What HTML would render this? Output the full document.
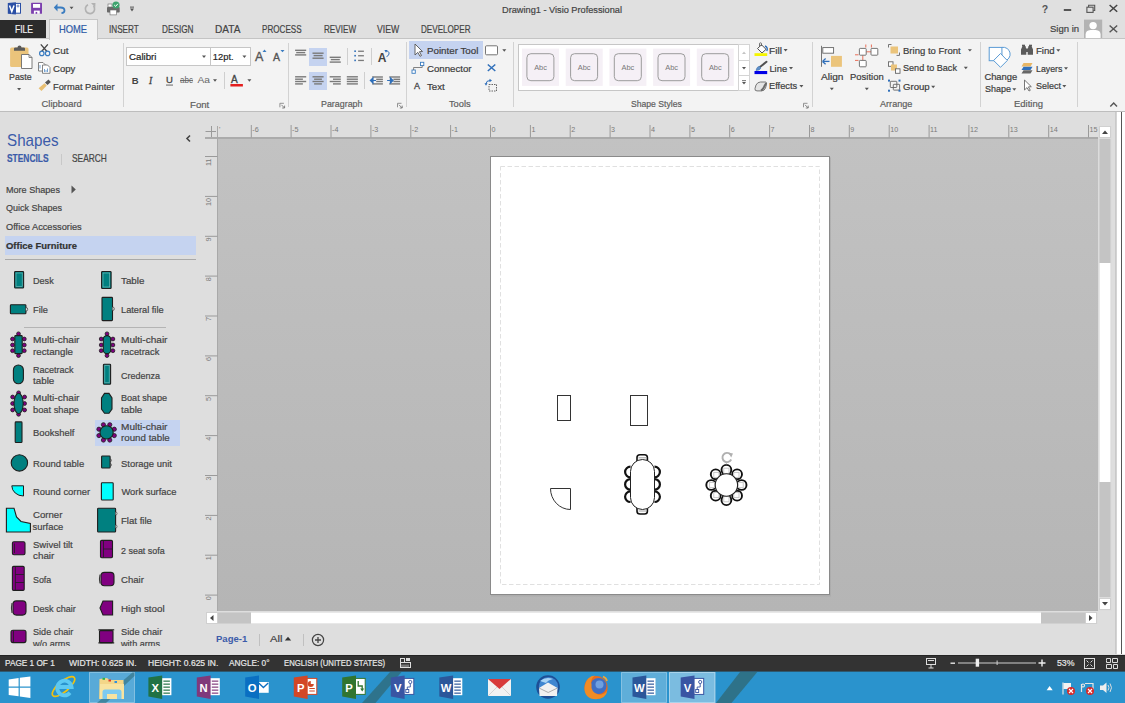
<!DOCTYPE html><html><head><meta charset="utf-8"><style>html,body{margin:0;padding:0;width:1125px;height:703px;overflow:hidden;position:relative;font-family:"Liberation Sans", sans-serif;}div{box-sizing:border-box}div[id]{-webkit-text-stroke:0.2px currentColor}</style></head><body><div style="position:absolute;left:0px;top:0px;width:1125px;height:38px;background:#e0e0e0;"></div>
<div style="position:absolute;left:0px;top:38px;width:1125px;height:73px;background:#f3f3f3;"></div>
<div style="position:absolute;left:0px;top:111px;width:1125px;height:1.2px;background:#bdbdbd;"></div>
<div style="position:absolute;left:0px;top:112px;width:1125px;height:543px;background:#dedede;"></div>
<div id="t0" style="position:absolute;left:501.80px;top:5.14px;font-size:9.6px;line-height:9.6px;color:#444;font-weight:400;white-space:nowrap;transform:scaleX(0.959);transform-origin:0 0;">Drawing1 - Visio Professional</div>
<div id="t1" style="position:absolute;left:1049.60px;top:23.71px;font-size:9.4px;line-height:9.4px;color:#444;font-weight:400;white-space:nowrap;transform:scaleX(1.018);transform-origin:0 0;">Sign in</div>
<div style="position:absolute;left:0px;top:20px;width:46px;height:18.5px;background:#2b2b2b;"></div>
<div id="t2" style="position:absolute;left:14.80px;top:25.03px;font-size:10.2px;line-height:10.2px;color:#f0f0f0;font-weight:400;white-space:nowrap;transform:scaleX(0.837);transform-origin:0 0;">FILE</div>
<div style="position:absolute;left:49px;top:19px;width:49px;height:21px;background:#f3f3f3;border:1px solid #c6c6c6;border-bottom:none"></div>
<div id="t3" style="position:absolute;left:59.40px;top:25.03px;font-size:10.2px;line-height:10.2px;color:#2f5ba6;font-weight:400;white-space:nowrap;transform:scaleX(0.919);transform-origin:0 0;">HOME</div>
<div id="t4" style="position:absolute;left:109.20px;top:25.03px;font-size:10.2px;line-height:10.2px;color:#444;font-weight:400;white-space:nowrap;transform:scaleX(0.799);transform-origin:0 0;">INSERT</div>
<div id="t5" style="position:absolute;left:161.80px;top:25.03px;font-size:10.2px;line-height:10.2px;color:#444;font-weight:400;white-space:nowrap;transform:scaleX(0.806);transform-origin:0 0;">DESIGN</div>
<div id="t6" style="position:absolute;left:215.20px;top:25.03px;font-size:10.2px;line-height:10.2px;color:#444;font-weight:400;white-space:nowrap;transform:scaleX(0.990);transform-origin:0 0;">DATA</div>
<div id="t7" style="position:absolute;left:262.00px;top:25.03px;font-size:10.2px;line-height:10.2px;color:#444;font-weight:400;white-space:nowrap;transform:scaleX(0.795);transform-origin:0 0;">PROCESS</div>
<div id="t8" style="position:absolute;left:323.50px;top:25.03px;font-size:10.2px;line-height:10.2px;color:#444;font-weight:400;white-space:nowrap;transform:scaleX(0.798);transform-origin:0 0;">REVIEW</div>
<div id="t9" style="position:absolute;left:377.00px;top:25.03px;font-size:10.2px;line-height:10.2px;color:#444;font-weight:400;white-space:nowrap;transform:scaleX(0.852);transform-origin:0 0;">VIEW</div>
<div id="t10" style="position:absolute;left:420.80px;top:25.03px;font-size:10.2px;line-height:10.2px;color:#444;font-weight:400;white-space:nowrap;transform:scaleX(0.795);transform-origin:0 0;">DEVELOPER</div>
<div style="position:absolute;left:123px;top:43px;width:1px;height:64px;background:#d2d2d2;"></div>
<div style="position:absolute;left:288px;top:42.7px;width:1px;height:64.3px;background:#d2d2d2;"></div>
<div style="position:absolute;left:406px;top:42px;width:1px;height:65px;background:#d2d2d2;"></div>
<div style="position:absolute;left:513px;top:42px;width:1px;height:65px;background:#d2d2d2;"></div>
<div style="position:absolute;left:812px;top:42px;width:1px;height:65px;background:#d2d2d2;"></div>
<div style="position:absolute;left:980px;top:42px;width:1px;height:65px;background:#d2d2d2;"></div>
<div style="position:absolute;left:1077px;top:42px;width:1px;height:65px;background:#d2d2d2;"></div>
<div id="t11" style="position:absolute;left:8.80px;top:72.41px;font-size:9.4px;line-height:9.4px;color:#3c3c3c;font-weight:400;white-space:nowrap;transform:scaleX(0.942);transform-origin:0 0;">Paste</div>
<div id="t12" style="position:absolute;left:53.20px;top:45.81px;font-size:9.4px;line-height:9.4px;color:#3c3c3c;font-weight:400;white-space:nowrap;transform:scaleX(1.069);transform-origin:0 0;">Cut</div>
<div id="t13" style="position:absolute;left:53.20px;top:64.01px;font-size:9.4px;line-height:9.4px;color:#3c3c3c;font-weight:400;white-space:nowrap;transform:scaleX(1.019);transform-origin:0 0;">Copy</div>
<div id="t14" style="position:absolute;left:53.20px;top:81.71px;font-size:9.4px;line-height:9.4px;color:#3c3c3c;font-weight:400;white-space:nowrap;transform:scaleX(0.994);transform-origin:0 0;">Format Painter</div>
<div id="t15" style="position:absolute;left:41.60px;top:99.31px;font-size:9.4px;line-height:9.4px;color:#5e5e5e;font-weight:400;white-space:nowrap;">Clipboard</div>
<div style="position:absolute;left:126px;top:47px;width:85px;height:19px;background:#fff;border:1px solid #c6c6c6"></div>
<div style="position:absolute;left:210px;top:47px;width:41px;height:19px;background:#fff;border:1px solid #c6c6c6"></div>
<div id="t16" style="position:absolute;left:128.80px;top:51.81px;font-size:9.4px;line-height:9.4px;color:#262626;font-weight:400;white-space:nowrap;transform:scaleX(1.035);transform-origin:0 0;">Calibri</div>
<div id="t17" style="position:absolute;left:212.80px;top:51.81px;font-size:9.4px;line-height:9.4px;color:#262626;font-weight:400;white-space:nowrap;">12pt.</div>
<div style="position:absolute;left:224px;top:72px;width:1px;height:17px;background:#cfcfcf;"></div>
<div id="t18" style="position:absolute;left:189.80px;top:99.51px;font-size:9.4px;line-height:9.4px;color:#5e5e5e;font-weight:400;white-space:nowrap;transform:scaleX(1.028);transform-origin:0 0;">Font</div>
<div style="position:absolute;left:309px;top:48px;width:17.5px;height:17.5px;background:#c5d3f0;"></div>
<div style="position:absolute;left:309px;top:72px;width:17.5px;height:17.5px;background:#c5d3f0;"></div>
<div style="position:absolute;left:347px;top:48px;width:1px;height:16.5px;background:#cfcfcf;"></div>
<div style="position:absolute;left:371px;top:48px;width:1px;height:16.5px;background:#cfcfcf;"></div>
<div style="position:absolute;left:364px;top:72px;width:1px;height:17px;background:#cfcfcf;"></div>
<div id="t19" style="position:absolute;left:320.60px;top:99.31px;font-size:9.4px;line-height:9.4px;color:#5e5e5e;font-weight:400;white-space:nowrap;transform:scaleX(0.948);transform-origin:0 0;">Paragraph</div>
<div style="position:absolute;left:409px;top:41px;width:74px;height:18px;background:#c5d3f0;"></div>
<div id="t20" style="position:absolute;left:426.50px;top:45.81px;font-size:9.4px;line-height:9.4px;color:#3c3c3c;font-weight:400;white-space:nowrap;transform:scaleX(1.042);transform-origin:0 0;">Pointer Tool</div>
<div id="t21" style="position:absolute;left:426.50px;top:63.61px;font-size:9.4px;line-height:9.4px;color:#3c3c3c;font-weight:400;white-space:nowrap;transform:scaleX(1.029);transform-origin:0 0;">Connector</div>
<div id="t22" style="position:absolute;left:426.50px;top:81.71px;font-size:9.4px;line-height:9.4px;color:#3c3c3c;font-weight:400;white-space:nowrap;transform:scaleX(1.035);transform-origin:0 0;">Text</div>
<div id="t23" style="position:absolute;left:449.20px;top:99.31px;font-size:9.4px;line-height:9.4px;color:#5e5e5e;font-weight:400;white-space:nowrap;transform:scaleX(0.987);transform-origin:0 0;">Tools</div>
<div style="position:absolute;left:518px;top:44px;width:232px;height:47px;background:#fff;border:1px solid #c6c6c6"></div>
<div id="t24" style="position:absolute;left:769.40px;top:45.61px;font-size:9.4px;line-height:9.4px;color:#3c3c3c;font-weight:400;white-space:nowrap;transform:scaleX(1.076);transform-origin:0 0;">Fill</div>
<div id="t25" style="position:absolute;left:769.40px;top:63.61px;font-size:9.4px;line-height:9.4px;color:#3c3c3c;font-weight:400;white-space:nowrap;">Line</div>
<div id="t26" style="position:absolute;left:769.40px;top:81.31px;font-size:9.4px;line-height:9.4px;color:#3c3c3c;font-weight:400;white-space:nowrap;transform:scaleX(0.989);transform-origin:0 0;">Effects</div>
<div id="t27" style="position:absolute;left:631.30px;top:99.31px;font-size:9.4px;line-height:9.4px;color:#5e5e5e;font-weight:400;white-space:nowrap;transform:scaleX(0.919);transform-origin:0 0;">Shape Styles</div>
<div id="t28" style="position:absolute;left:821.00px;top:72.31px;font-size:9.4px;line-height:9.4px;color:#3c3c3c;font-weight:400;white-space:nowrap;transform:scaleX(1.079);transform-origin:0 0;">Align</div>
<div id="t29" style="position:absolute;left:850.20px;top:72.31px;font-size:9.4px;line-height:9.4px;color:#3c3c3c;font-weight:400;white-space:nowrap;transform:scaleX(1.010);transform-origin:0 0;">Position</div>
<div id="t30" style="position:absolute;left:903.10px;top:45.91px;font-size:9.4px;line-height:9.4px;color:#3c3c3c;font-weight:400;white-space:nowrap;transform:scaleX(1.016);transform-origin:0 0;">Bring to Front</div>
<div id="t31" style="position:absolute;left:903.10px;top:63.41px;font-size:9.4px;line-height:9.4px;color:#3c3c3c;font-weight:400;white-space:nowrap;transform:scaleX(0.967);transform-origin:0 0;">Send to Back</div>
<div id="t32" style="position:absolute;left:903.10px;top:82.01px;font-size:9.4px;line-height:9.4px;color:#3c3c3c;font-weight:400;white-space:nowrap;transform:scaleX(1.024);transform-origin:0 0;">Group</div>
<div id="t33" style="position:absolute;left:879.80px;top:99.31px;font-size:9.4px;line-height:9.4px;color:#5e5e5e;font-weight:400;white-space:nowrap;transform:scaleX(0.971);transform-origin:0 0;">Arrange</div>
<div id="t34" style="position:absolute;left:984.40px;top:72.41px;font-size:9.4px;line-height:9.4px;color:#3c3c3c;font-weight:400;white-space:nowrap;">Change</div>
<div id="t35" style="position:absolute;left:985.20px;top:84.41px;font-size:9.4px;line-height:9.4px;color:#3c3c3c;font-weight:400;white-space:nowrap;transform:scaleX(0.955);transform-origin:0 0;">Shape</div>
<div id="t36" style="position:absolute;left:1035.80px;top:45.71px;font-size:9.4px;line-height:9.4px;color:#3c3c3c;font-weight:400;white-space:nowrap;transform:scaleX(1.025);transform-origin:0 0;">Find</div>
<div id="t37" style="position:absolute;left:1035.80px;top:63.61px;font-size:9.4px;line-height:9.4px;color:#3c3c3c;font-weight:400;white-space:nowrap;transform:scaleX(0.938);transform-origin:0 0;">Layers</div>
<div id="t38" style="position:absolute;left:1035.80px;top:81.31px;font-size:9.4px;line-height:9.4px;color:#3c3c3c;font-weight:400;white-space:nowrap;transform:scaleX(0.959);transform-origin:0 0;">Select</div>
<div id="t39" style="position:absolute;left:1013.50px;top:99.31px;font-size:9.4px;line-height:9.4px;color:#5e5e5e;font-weight:400;white-space:nowrap;transform:scaleX(1.011);transform-origin:0 0;">Editing</div>
<div id="t40" style="position:absolute;left:7.30px;top:131.85px;font-size:17px;line-height:17px;color:#3b5ba9;font-weight:400;white-space:nowrap;transform:scaleX(0.893);transform-origin:0 0;-webkit-text-stroke:0">Shapes</div>
<div id="t41" style="position:absolute;left:7.30px;top:154.44px;font-size:10.3px;line-height:10.3px;color:#3b5ba9;font-weight:700;white-space:nowrap;transform:scaleX(0.815);transform-origin:0 0;">STENCILS</div>
<div style="position:absolute;left:61px;top:154px;width:1px;height:11px;background:#c8c8c8;"></div>
<div id="t42" style="position:absolute;left:71.90px;top:154.44px;font-size:10.3px;line-height:10.3px;color:#444;font-weight:400;white-space:nowrap;transform:scaleX(0.813);transform-origin:0 0;">SEARCH</div>
<div id="t43" style="position:absolute;left:6.20px;top:185.21px;font-size:9.4px;line-height:9.4px;color:#444;font-weight:400;white-space:nowrap;transform:scaleX(0.967);transform-origin:0 0;">More Shapes</div>
<div id="t44" style="position:absolute;left:6.20px;top:203.41px;font-size:9.4px;line-height:9.4px;color:#444;font-weight:400;white-space:nowrap;transform:scaleX(0.961);transform-origin:0 0;">Quick Shapes</div>
<div id="t45" style="position:absolute;left:6.20px;top:221.51px;font-size:9.4px;line-height:9.4px;color:#444;font-weight:400;white-space:nowrap;transform:scaleX(0.984);transform-origin:0 0;">Office Accessories</div>
<div style="position:absolute;left:5px;top:236px;width:191px;height:19px;background:#c5d3f0;"></div>
<div id="t46" style="position:absolute;left:6.20px;top:240.71px;font-size:9.4px;line-height:9.4px;color:#333;font-weight:700;white-space:nowrap;transform:scaleX(1.010);transform-origin:0 0;">Office Furniture</div>
<div style="position:absolute;left:5px;top:259px;width:191px;height:1px;background:#a9a9a9;"></div>
<div style="position:absolute;left:24px;top:327px;width:142px;height:1px;background:#b4b4b4;"></div>
<div style="position:absolute;left:94.5px;top:420px;width:85.5px;height:26px;background:#c5d3f0;"></div>
<div id="t47" style="position:absolute;left:32.60px;top:276.41px;font-size:9.4px;line-height:9.4px;color:#444;font-weight:400;white-space:nowrap;transform:scaleX(0.969);transform-origin:0 0;">Desk</div>
<div id="t48" style="position:absolute;left:121.40px;top:276.41px;font-size:9.4px;line-height:9.4px;color:#444;font-weight:400;white-space:nowrap;transform:scaleX(1.044);transform-origin:0 0;">Table</div>
<div id="t49" style="position:absolute;left:32.60px;top:305.21px;font-size:9.4px;line-height:9.4px;color:#444;font-weight:400;white-space:nowrap;transform:scaleX(0.986);transform-origin:0 0;">File</div>
<div id="t50" style="position:absolute;left:121.40px;top:305.21px;font-size:9.4px;line-height:9.4px;color:#444;font-weight:400;white-space:nowrap;transform:scaleX(0.985);transform-origin:0 0;">Lateral file</div>
<div id="t51" style="position:absolute;left:32.60px;top:335.01px;font-size:9.4px;line-height:9.4px;color:#444;font-weight:400;white-space:nowrap;transform:scaleX(1.075);transform-origin:0 0;">Multi-chair</div>
<div id="t52" style="position:absolute;left:32.60px;top:346.51px;font-size:9.4px;line-height:9.4px;color:#444;font-weight:400;white-space:nowrap;transform:scaleX(1.037);transform-origin:0 0;">rectangle</div>
<div id="t53" style="position:absolute;left:121.40px;top:335.01px;font-size:9.4px;line-height:9.4px;color:#444;font-weight:400;white-space:nowrap;transform:scaleX(1.075);transform-origin:0 0;">Multi-chair</div>
<div id="t54" style="position:absolute;left:121.40px;top:346.51px;font-size:9.4px;line-height:9.4px;color:#444;font-weight:400;white-space:nowrap;transform:scaleX(0.993);transform-origin:0 0;">racetrack</div>
<div id="t55" style="position:absolute;left:32.60px;top:364.71px;font-size:9.4px;line-height:9.4px;color:#444;font-weight:400;white-space:nowrap;transform:scaleX(0.962);transform-origin:0 0;">Racetrack</div>
<div id="t56" style="position:absolute;left:32.60px;top:376.01px;font-size:9.4px;line-height:9.4px;color:#444;font-weight:400;white-space:nowrap;transform:scaleX(1.047);transform-origin:0 0;">table</div>
<div id="t57" style="position:absolute;left:121.40px;top:370.81px;font-size:9.4px;line-height:9.4px;color:#444;font-weight:400;white-space:nowrap;transform:scaleX(0.957);transform-origin:0 0;">Credenza</div>
<div id="t58" style="position:absolute;left:32.60px;top:393.41px;font-size:9.4px;line-height:9.4px;color:#444;font-weight:400;white-space:nowrap;transform:scaleX(1.075);transform-origin:0 0;">Multi-chair</div>
<div id="t59" style="position:absolute;left:32.60px;top:405.41px;font-size:9.4px;line-height:9.4px;color:#444;font-weight:400;white-space:nowrap;transform:scaleX(0.991);transform-origin:0 0;">boat shape</div>
<div id="t60" style="position:absolute;left:121.40px;top:393.41px;font-size:9.4px;line-height:9.4px;color:#444;font-weight:400;white-space:nowrap;transform:scaleX(0.970);transform-origin:0 0;">Boat shape</div>
<div id="t61" style="position:absolute;left:121.40px;top:405.41px;font-size:9.4px;line-height:9.4px;color:#444;font-weight:400;white-space:nowrap;transform:scaleX(1.047);transform-origin:0 0;">table</div>
<div id="t62" style="position:absolute;left:32.60px;top:428.41px;font-size:9.4px;line-height:9.4px;color:#444;font-weight:400;white-space:nowrap;transform:scaleX(1.006);transform-origin:0 0;">Bookshelf</div>
<div id="t63" style="position:absolute;left:121.40px;top:422.01px;font-size:9.4px;line-height:9.4px;color:#444;font-weight:400;white-space:nowrap;transform:scaleX(1.075);transform-origin:0 0;">Multi-chair</div>
<div id="t64" style="position:absolute;left:121.40px;top:433.41px;font-size:9.4px;line-height:9.4px;color:#444;font-weight:400;white-space:nowrap;transform:scaleX(1.040);transform-origin:0 0;">round table</div>
<div id="t65" style="position:absolute;left:32.60px;top:458.51px;font-size:9.4px;line-height:9.4px;color:#444;font-weight:400;white-space:nowrap;transform:scaleX(1.013);transform-origin:0 0;">Round table</div>
<div id="t66" style="position:absolute;left:121.40px;top:458.51px;font-size:9.4px;line-height:9.4px;color:#444;font-weight:400;white-space:nowrap;transform:scaleX(1.007);transform-origin:0 0;">Storage unit</div>
<div id="t67" style="position:absolute;left:32.60px;top:487.21px;font-size:9.4px;line-height:9.4px;color:#444;font-weight:400;white-space:nowrap;transform:scaleX(1.005);transform-origin:0 0;">Round corner</div>
<div id="t68" style="position:absolute;left:121.40px;top:487.21px;font-size:9.4px;line-height:9.4px;color:#444;font-weight:400;white-space:nowrap;">Work surface</div>
<div id="t69" style="position:absolute;left:32.60px;top:510.21px;font-size:9.4px;line-height:9.4px;color:#444;font-weight:400;white-space:nowrap;transform:scaleX(1.026);transform-origin:0 0;">Corner</div>
<div id="t70" style="position:absolute;left:32.60px;top:521.61px;font-size:9.4px;line-height:9.4px;color:#444;font-weight:400;white-space:nowrap;">surface</div>
<div id="t71" style="position:absolute;left:121.40px;top:516.21px;font-size:9.4px;line-height:9.4px;color:#444;font-weight:400;white-space:nowrap;transform:scaleX(1.023);transform-origin:0 0;">Flat file</div>
<div id="t72" style="position:absolute;left:32.60px;top:539.51px;font-size:9.4px;line-height:9.4px;color:#444;font-weight:400;white-space:nowrap;transform:scaleX(1.018);transform-origin:0 0;">Swivel tilt</div>
<div id="t73" style="position:absolute;left:32.60px;top:551.21px;font-size:9.4px;line-height:9.4px;color:#444;font-weight:400;white-space:nowrap;transform:scaleX(1.048);transform-origin:0 0;">chair</div>
<div id="t74" style="position:absolute;left:121.40px;top:545.51px;font-size:9.4px;line-height:9.4px;color:#444;font-weight:400;white-space:nowrap;transform:scaleX(0.953);transform-origin:0 0;">2 seat sofa</div>
<div id="t75" style="position:absolute;left:32.60px;top:574.51px;font-size:9.4px;line-height:9.4px;color:#444;font-weight:400;white-space:nowrap;transform:scaleX(0.948);transform-origin:0 0;">Sofa</div>
<div id="t76" style="position:absolute;left:121.40px;top:574.51px;font-size:9.4px;line-height:9.4px;color:#444;font-weight:400;white-space:nowrap;transform:scaleX(1.018);transform-origin:0 0;">Chair</div>
<div id="t77" style="position:absolute;left:32.60px;top:603.51px;font-size:9.4px;line-height:9.4px;color:#444;font-weight:400;white-space:nowrap;transform:scaleX(0.966);transform-origin:0 0;">Desk chair</div>
<div id="t78" style="position:absolute;left:121.40px;top:603.51px;font-size:9.4px;line-height:9.4px;color:#444;font-weight:400;white-space:nowrap;transform:scaleX(1.048);transform-origin:0 0;">High stool</div>
<div id="t79" style="position:absolute;left:32.60px;top:627.41px;font-size:9.4px;line-height:9.4px;color:#444;font-weight:400;white-space:nowrap;transform:scaleX(0.969);transform-origin:0 0;">Side chair</div>
<div id="t80" style="position:absolute;left:32.60px;top:639.01px;font-size:9.4px;line-height:9.4px;color:#444;font-weight:400;white-space:nowrap;transform:scaleX(0.973);transform-origin:0 0;">w/o arms</div>
<div id="t81" style="position:absolute;left:121.40px;top:627.41px;font-size:9.4px;line-height:9.4px;color:#444;font-weight:400;white-space:nowrap;transform:scaleX(0.990);transform-origin:0 0;">Side chair</div>
<div id="t82" style="position:absolute;left:121.40px;top:639.01px;font-size:9.4px;line-height:9.4px;color:#444;font-weight:400;white-space:nowrap;transform:scaleX(0.972);transform-origin:0 0;">with arms</div>
<div style="position:absolute;left:0px;top:646px;width:200px;height:8px;background:#dedede;"></div>
<div style="position:absolute;left:217px;top:137px;width:881px;height:474px;background:linear-gradient(#c2c2c2, #b5b5b5);"></div>
<div style="position:absolute;left:205px;top:137px;width:1px;height:0px;background:#000;"></div>
<div id="t83" style="position:absolute;left:216.10px;top:633.87px;font-size:9.8px;line-height:9.8px;color:#3b5ba9;font-weight:700;white-space:nowrap;transform:scaleX(0.974);transform-origin:0 0;-webkit-text-stroke:0">Page-1</div>
<div style="position:absolute;left:259px;top:634px;width:1px;height:12px;background:#c0c0c0;"></div>
<div id="t84" style="position:absolute;left:269.80px;top:633.87px;font-size:9.8px;line-height:9.8px;color:#444;font-weight:400;white-space:nowrap;transform:scaleX(1.139);transform-origin:0 0;">All</div>
<div style="position:absolute;left:303px;top:634px;width:1px;height:12px;background:#c0c0c0;"></div>
<div style="position:absolute;left:0px;top:654.6px;width:1125px;height:17.4px;background:#333333;"></div>
<div style="position:absolute;left:0px;top:654.6px;width:1125px;height:1.2px;background:#242424;"></div>
<div id="t85" style="position:absolute;left:5.10px;top:659.05px;font-size:9px;line-height:9px;color:#e8e8e8;font-weight:400;white-space:nowrap;transform:scaleX(0.916);transform-origin:0 0;">PAGE 1 OF 1</div>
<div id="t86" style="position:absolute;left:69.10px;top:659.05px;font-size:9px;line-height:9px;color:#e8e8e8;font-weight:400;white-space:nowrap;transform:scaleX(0.953);transform-origin:0 0;">WIDTH: 0.625 IN.</div>
<div id="t87" style="position:absolute;left:147.80px;top:659.05px;font-size:9px;line-height:9px;color:#e8e8e8;font-weight:400;white-space:nowrap;transform:scaleX(0.943);transform-origin:0 0;">HEIGHT: 0.625 IN.</div>
<div id="t88" style="position:absolute;left:229.30px;top:659.05px;font-size:9px;line-height:9px;color:#e8e8e8;font-weight:400;white-space:nowrap;transform:scaleX(0.918);transform-origin:0 0;">ANGLE: 0°</div>
<div id="t89" style="position:absolute;left:283.60px;top:659.05px;font-size:9px;line-height:9px;color:#e8e8e8;font-weight:400;white-space:nowrap;transform:scaleX(0.860);transform-origin:0 0;">ENGLISH (UNITED STATES)</div>
<div id="t90" style="position:absolute;left:1056.80px;top:659.35px;font-size:9px;line-height:9px;color:#e8e8e8;font-weight:400;white-space:nowrap;transform:scaleX(0.971);transform-origin:0 0;">53%</div>
<svg style="position:absolute;left:0;top:0" width="1125" height="703" viewBox="0 0 1125 703"><rect x="15.5" y="3.4" width="5" height="9.8" fill="#fff" stroke="#2b4fa5" stroke-width="1"/><circle cx="18" cy="6" r="1" fill="none" stroke="#2b4fa5" stroke-width="0.7"/><path d="M7.8 3 L15.9 2.2 L15.9 14.6 L7.8 13.8 Z" fill="#2b4fa5"/><path d="M9.5 5.5 L11.8 11.5 L14 5.5" fill="none" stroke="#fff" stroke-width="1.5"/>
<rect x="31.1" y="2.8" width="10.9" height="11" rx="0.6" fill="#7c3fae"/><rect x="33" y="4" width="7.1" height="3.8" fill="#fff"/><rect x="33.9" y="10.6" width="5.9" height="3.2" fill="#fff"/><rect x="35.6" y="11.9" width="1.6" height="1.9" fill="#7c3fae"/>
<path d="M56 7.5 L60.5 7.5 Q64.5 7.5 64.5 10.5 Q64.5 13 61.5 13" fill="none" stroke="#3a7cc0" stroke-width="1.8"/><path d="M53.8 7.5 L57.5 3.5 L57.5 11.5 Z" fill="#3a7cc0"/>
<path d="M69.6 6.8 L73.5 6.8 L71.55 9.2 Z" fill="#555"/>
<path d="M93.5 6 A4.6 4.6 0 1 1 88 4.8" fill="none" stroke="#b2b2b2" stroke-width="1.7"/><path d="M91 3 L95.5 3 L95.2 7.5 Z" fill="#b2b2b2"/>
<rect x="108" y="4" width="4" height="3" fill="#fff" stroke="#666" stroke-width="0.6"/><rect x="107" y="7" width="12.7" height="5.5" rx="0.8" fill="#6a6a6a"/><rect x="110" y="10" width="6.5" height="4.9" fill="#fff" stroke="#6a6a6a" stroke-width="0.6"/><circle cx="116" cy="5" r="3.6" fill="#3ea36e"/><path d="M114.2 5 L115.6 6.4 L117.9 3.8" fill="none" stroke="#fff" stroke-width="1"/>
<rect x="130" y="6.6" width="4" height="1" fill="#555"/><path d="M130 8.6 L134 8.6 L132 11.4 Z" fill="#555"/>
<text x="1041.8" y="12.7" font-size="10.5" font-weight="700" fill="#555" font-family="Liberation Sans">?</text>
<rect x="1063.8" y="9" width="7.4" height="2" fill="#555"/>
<rect x="1086.9" y="7.2" width="6.2" height="5.2" fill="none" stroke="#555" stroke-width="1.1"/><path d="M1088.6 7 V5.3 H1094.7 V10.5 H1093.2" fill="none" stroke="#555" stroke-width="1.1"/>
<path d="M1109.6 5 L1117.2 11.8 M1117.2 5 L1109.6 11.8" stroke="#444" stroke-width="1.5"/>
<path d="M1109.6 25.5 L1117.2 32.3 M1117.2 25.5 L1109.6 32.3" stroke="#555" stroke-width="1.4"/>
<rect x="1084" y="19.6" width="18.2" height="18.4" fill="#b3b3b3"/><circle cx="1093.1" cy="25.6" r="3.7" fill="#fff"/><path d="M1085.6 38 L1085.6 34.5 Q1085.6 30.3 1090.5 30 L1095.7 30 Q1100.6 30.3 1100.6 34.5 L1100.6 38 Z" fill="#fff"/>
<rect x="0" y="38" width="49" height="1" fill="#c4c4c4"/><rect x="98" y="38" width="1027" height="1" fill="#c4c4c4"/>
<rect x="10.1" y="47.4" width="18.4" height="19.6" rx="1.5" fill="#ebc47b"/><path d="M14 50.8 L14 48.6 Q14 47.4 15.5 47.4 L17.5 47.4 A2 2 0 0 1 21.5 47.4 L23.5 47.4 Q25 47.4 25 48.6 L25 50.8 Z" fill="#5a5a5a"/><path d="M21.5 54.5 H29 L32 57.5 V68.5 H21.5 Z" fill="#fff" stroke="#6d6d6d" stroke-width="0.9"/><path d="M29 54.5 V57.5 H32" fill="none" stroke="#6d6d6d" stroke-width="0.8"/>
<path d="M17.1 88.0 L21.1 88.0 L19.1 90.4 Z" fill="#555"/>
<path d="M40.8 44.3 L47 51.5 M47.8 44.3 L41.6 51.5" stroke="#444" stroke-width="1.3"/><circle cx="41.8" cy="53.4" r="2.2" fill="none" stroke="#3a7cc0" stroke-width="1.2"/><circle cx="47.6" cy="53.4" r="2.2" fill="none" stroke="#3a7cc0" stroke-width="1.2"/>
<path d="M38.5 62.5 H43 L45 64.5 V71 H38.5 Z" fill="#fff" stroke="#666" stroke-width="0.8"/><path d="M42.5 65 H47.5 L50 67.5 V73.3 H42.5 Z" fill="#fff" stroke="#666" stroke-width="0.8"/><path d="M40 65 V68.5 M44.5 69 V72 M46 70 V72 M47.5 68.5 V72" stroke="#3a7cc0" stroke-width="0.7"/>
<path d="M45 82.5 L48.5 79.6 L50.8 82 L47.5 85 Z" fill="#555"/><path d="M44.5 83.2 L46.8 85.5 L41.5 91 L38.6 88.2 Z" fill="#e8bf72"/>
<path d="M202 55.599999999999994 L206 55.599999999999994 L204 58.0 Z" fill="#555"/>
<path d="M242.4 55.599999999999994 L246.4 55.599999999999994 L244.4 58.0 Z" fill="#555"/>
<text x="255" y="61.2" font-size="12.5" fill="#555" stroke="#555" stroke-width="0.35" font-family="Liberation Sans">A</text><path d="M262.5 52 L264.5 49.5 L266.5 52 Z" fill="#3a7cc0"/>
<text x="273" y="61.2" font-size="10.5" fill="#555" stroke="#555" stroke-width="0.35" font-family="Liberation Sans">A</text><path d="M280.5 50 L284.5 50 L282.5 52.3 Z" fill="#3a7cc0"/>
<text x="131.7" y="83.5" font-size="9.5" font-weight="700" fill="#444" font-family="Liberation Sans">B</text>
<text x="149" y="83.5" font-size="9.5" font-style="italic" fill="#444" stroke="#444" stroke-width="0.3" font-family="Liberation Serif">I</text>
<text x="166" y="83.3" font-size="9.5" fill="#444" stroke="#444" stroke-width="0.3" font-family="Liberation Sans">U</text><rect x="166" y="84.6" width="7" height="0.9" fill="#555"/>
<text x="180" y="83.3" font-size="8.5" fill="#666" font-family="Liberation Sans" textLength="13" lengthAdjust="spacingAndGlyphs">abc</text><rect x="180" y="80" width="13" height="0.9" fill="#666"/>
<text x="197.4" y="83.3" font-size="9.8" fill="#666" font-family="Liberation Sans" textLength="12.5" lengthAdjust="spacingAndGlyphs">Aa</text>
<path d="M213 79.3 L217 79.3 L215 81.7 Z" fill="#555"/>
<text x="231" y="83" font-size="10" fill="#444" stroke="#444" stroke-width="0.35" font-family="Liberation Sans">A</text><rect x="230.4" y="84" width="12.5" height="2.5" fill="#e31e1e"/>
<path d="M247.4 79.3 L251.4 79.3 L249.4 81.7 Z" fill="#555"/>
<path d="M279.9 107.3 V103.3 H283.9" fill="none" stroke="#888" stroke-width="0.9"/><path d="M281.4 104.8 L284.59999999999997 108.0 M284.59999999999997 105.6 V108.0 H282.2" fill="none" stroke="#777" stroke-width="0.9"/>
<rect x="295.1" y="49.6" width="11.1" height="1.4" fill="#7a7a7a"/><rect x="296.2" y="51.9" width="9.0" height="1.4" fill="#7a7a7a"/><rect x="295.1" y="54.2" width="11.1" height="1.4" fill="#7a7a7a"/>
<rect x="312.5" y="52.5" width="11.1" height="1.4" fill="#7a7a7a"/><rect x="313.6" y="54.9" width="9.0" height="1.4" fill="#7a7a7a"/><rect x="312.5" y="57.5" width="11.1" height="1.4" fill="#7a7a7a"/>
<rect x="329.7" y="56.6" width="11.1" height="1.4" fill="#7a7a7a"/><rect x="330.8" y="58.9" width="9.0" height="1.4" fill="#7a7a7a"/><rect x="329.7" y="61.4" width="11.1" height="1.4" fill="#7a7a7a"/>
<rect x="295.1" y="76.1" width="11.1" height="1.4" fill="#7a7a7a"/><rect x="295.1" y="78.5" width="7.8" height="1.4" fill="#7a7a7a"/><rect x="295.1" y="80.8" width="11.1" height="1.4" fill="#7a7a7a"/><rect x="295.1" y="83.2" width="7.8" height="1.4" fill="#7a7a7a"/>
<rect x="312.5" y="76.1" width="11.1" height="1.4" fill="#7a7a7a"/><rect x="314.1" y="78.5" width="7.8" height="1.4" fill="#7a7a7a"/><rect x="312.5" y="80.8" width="11.1" height="1.4" fill="#7a7a7a"/><rect x="314.1" y="83.2" width="7.8" height="1.4" fill="#7a7a7a"/>
<rect x="329.7" y="76.1" width="11.1" height="1.4" fill="#7a7a7a"/><rect x="333.0" y="78.5" width="7.8" height="1.4" fill="#7a7a7a"/><rect x="329.7" y="80.8" width="11.1" height="1.4" fill="#7a7a7a"/><rect x="333.0" y="83.2" width="7.8" height="1.4" fill="#7a7a7a"/>
<rect x="346.8" y="76.1" width="11.1" height="1.4" fill="#7a7a7a"/><rect x="346.8" y="78.5" width="11.1" height="1.4" fill="#7a7a7a"/><rect x="346.8" y="80.8" width="11.1" height="1.4" fill="#7a7a7a"/><rect x="346.8" y="83.2" width="11.1" height="1.4" fill="#7a7a7a"/>
<rect x="354.3" y="50.400000000000006" width="1.6" height="1.6" fill="#2f6fba"/><rect x="358.1" y="50.6" width="5.8" height="1.3" fill="#7a7a7a"/><rect x="354.3" y="54.900000000000006" width="1.6" height="1.6" fill="#2f6fba"/><rect x="358.1" y="55.1" width="5.8" height="1.3" fill="#7a7a7a"/><rect x="354.3" y="59.6" width="1.6" height="1.6" fill="#2f6fba"/><rect x="358.1" y="59.8" width="5.8" height="1.3" fill="#7a7a7a"/>
<text x="377.8" y="61.8" font-size="12" font-weight="700" fill="#444" font-family="Liberation Sans">A</text><path d="M385.5 50.8 Q389.5 51 389 54 Q388.5 56 386.5 56.6" fill="none" stroke="#2f6fba" stroke-width="1"/><path d="M384.4 50.1 L387.4 49.9 L386 52.8 Z" fill="#2f6fba"/>
<rect x="372.1" y="76.3" width="10.8" height="1.4" fill="#7a7a7a"/><rect x="376.2" y="78.6" width="6.7" height="1.4" fill="#7a7a7a"/><rect x="376.2" y="80.8" width="6.7" height="1.4" fill="#7a7a7a"/><rect x="372.1" y="83.2" width="10.8" height="1.4" fill="#7a7a7a"/>
<rect x="389.3" y="76.3" width="10.8" height="1.4" fill="#7a7a7a"/><rect x="393.4" y="78.6" width="6.7" height="1.4" fill="#7a7a7a"/><rect x="393.4" y="80.8" width="6.7" height="1.4" fill="#7a7a7a"/><rect x="389.3" y="83.2" width="10.8" height="1.4" fill="#7a7a7a"/>
<path d="M370.4 80.5 L373 78 L373 83 Z M372.5 80.5 H376" fill="#2f6fba" stroke="#2f6fba" stroke-width="1.2"/><path d="M393 80.5 L390.4 78 L390.4 83 Z M387.1 80.5 H390.5" fill="#2f6fba" stroke="#2f6fba" stroke-width="1.2"/>
<path d="M397.5 107.3 V103.3 H401.5" fill="none" stroke="#888" stroke-width="0.9"/><path d="M399 104.8 L402.2 108.0 M402.2 105.6 V108.0 H399.8" fill="none" stroke="#777" stroke-width="0.9"/>
<path d="M415 44 L415 55 L417.8 52.4 L420 56.3 L421.5 55.5 L419.4 51.7 L422.5 51.5 Z" fill="#fff" stroke="#555" stroke-width="0.9" stroke-linejoin="round"/>
<rect x="485.5" y="45.8" width="12" height="9" rx="1" fill="#fff" stroke="#666" stroke-width="0.9"/>
<path d="M502.3 49.3 L506.3 49.3 L504.3 51.7 Z" fill="#555"/>
<rect x="412" y="70" width="3.3" height="3.3" fill="#fff" stroke="#3a7cc0" stroke-width="0.9"/><rect x="420.5" y="62.3" width="3.3" height="3.3" fill="#fff" stroke="#3a7cc0" stroke-width="0.9"/><path d="M413.6 70 V67.5 H422.2 V65.6" fill="none" stroke="#666" stroke-width="0.8"/>
<path d="M487.8 64.5 L495.3 71 M495.3 64.5 L487.8 71" stroke="#2f6fba" stroke-width="1.5"/>
<text x="414" y="89.2" font-size="9" fill="#444" stroke="#444" stroke-width="0.3" font-family="Liberation Sans">A</text>
<rect x="489" y="84.5" width="7.5" height="6.5" fill="none" stroke="#666" stroke-width="1" stroke-dasharray="1.5 1"/><path d="M486 84 Q486 80.5 490 80.5" fill="none" stroke="#2f6fba" stroke-width="1"/><path d="M489.5 78.8 L492 80.5 L489.5 82.3 Z M484.5 83.3 L486 85.8 L487.5 83.3 Z" fill="#2f6fba"/>
<rect x="522.0" y="48.6" width="37" height="37.3" fill="#f5f0f6"/><rect x="526.9" y="53.7" width="27" height="27" rx="4" fill="#f5f0f6" stroke="#9c9c9c" stroke-width="1"/><text x="540.5" y="70" font-size="7.4" fill="#777" text-anchor="middle" font-family="Liberation Sans">Abc</text>
<rect x="565.7" y="48.6" width="37" height="37.3" fill="#f5f0f6"/><rect x="570.6" y="53.7" width="27" height="27" rx="4" fill="#f5f0f6" stroke="#9c9c9c" stroke-width="1"/><text x="584.2" y="70" font-size="7.4" fill="#777" text-anchor="middle" font-family="Liberation Sans">Abc</text>
<rect x="609.4" y="48.6" width="37" height="37.3" fill="#f5f0f6"/><rect x="614.3" y="53.7" width="27" height="27" rx="4" fill="#f5f0f6" stroke="#9c9c9c" stroke-width="1"/><text x="627.9" y="70" font-size="7.4" fill="#777" text-anchor="middle" font-family="Liberation Sans">Abc</text>
<rect x="653.1" y="48.6" width="37" height="37.3" fill="#f5f0f6"/><rect x="658.0" y="53.7" width="27" height="27" rx="4" fill="#f5f0f6" stroke="#9c9c9c" stroke-width="1"/><text x="671.6" y="70" font-size="7.4" fill="#777" text-anchor="middle" font-family="Liberation Sans">Abc</text>
<rect x="696.8" y="48.6" width="37" height="37.3" fill="#f5f0f6"/><rect x="701.7" y="53.7" width="27" height="27" rx="4" fill="#f5f0f6" stroke="#9c9c9c" stroke-width="1"/><text x="715.3" y="70" font-size="7.4" fill="#777" text-anchor="middle" font-family="Liberation Sans">Abc</text>
<rect x="738.5" y="44.5" width="11" height="46" fill="#fff" stroke="#d4d4d4" stroke-width="1"/><path d="M738.5 60.5 H749.5 M738.5 75.5 H749.5" stroke="#d4d4d4"/><path d="M742 54 L744 51.6 L746 54 Z" fill="#c4c4c4"/><path d="M742 67 L746 67 L744 69.4 Z" fill="#555"/><rect x="742" y="80.3" width="4" height="0.8" fill="#555"/><path d="M742 82 L746 82 L744 84.4 Z" fill="#555"/>
<path d="M757.5 48.5 L761.5 44.8 L766 49.3 L762 53 Z" fill="#fff" stroke="#505050" stroke-width="1"/><path d="M759.5 46.5 V43.6 Q759.5 42.8 760.5 42.8 Q761.5 42.8 761.5 43.8 V46" fill="none" stroke="#505050" stroke-width="0.8"/><path d="M765 46 Q768.3 47.3 766.8 51" fill="none" stroke="#2f6fba" stroke-width="1.4"/><rect x="754.5" y="53.2" width="12.7" height="2.8" fill="#f5f500"/>
<path d="M783.6 49.099999999999994 L787.6 49.099999999999994 L785.6 51.5 Z" fill="#555"/>
<path d="M760 67 L766.5 61.8" stroke="#505050" stroke-width="2" stroke-linecap="round"/><path d="M756 70.5 Q756.5 67 759.2 66.2 L761 68 Q760 70.5 756 70.5 Z" fill="#5e8fc8" stroke="#4a78b0" stroke-width="0.6"/><rect x="754.5" y="71" width="12.7" height="3.1" fill="#0000e6"/>
<path d="M789 67.1 L793 67.1 L791 69.5 Z" fill="#555"/>
<path d="M756 85 Q757.5 82 760.5 82 L765.5 82 Q767 82 766.5 84.5 L765.5 88 Q764.5 90.9 761.5 90.9 L757 90.9 Q754.5 90.9 755 88.5 Z" fill="#e4e4e4" stroke="#6a6a6a" stroke-width="0.9"/><path d="M761 90.5 Q763.5 89 764.5 86 L766.3 83" fill="none" stroke="#6a6a6a" stroke-width="2"/>
<path d="M799.4 85.0 L803.4 85.0 L801.4 87.4 Z" fill="#555"/>
<path d="M803.5 107.3 V103.3 H807.5" fill="none" stroke="#888" stroke-width="0.9"/><path d="M805 104.8 L808.2 108.0 M808.2 105.6 V108.0 H805.8" fill="none" stroke="#777" stroke-width="0.9"/>
<rect x="821" y="45.8" width="1" height="21" fill="#777"/><rect x="822.8" y="47.6" width="10.8" height="5.6" fill="#fff" stroke="#666" stroke-width="0.9"/><rect x="831" y="55.9" width="10.9" height="10.9" fill="#ebc47b"/><path d="M823 61.4 H829.5" stroke="#2f6fba" stroke-width="1.3"/><path d="M822.5 61.4 L825.6 58.6 M822.5 61.4 L825.6 64.2" stroke="#2f6fba" stroke-width="1.3"/>
<path d="M829.8 87.8 L833.8 87.8 L831.8 90.2 Z" fill="#555"/>
<path d="M865.8 44.5 V47.5 M871.4 44.5 V47.5 M855 54.8 H858.5 M855 60.4 H858.5 M866.2 51.8 H871 M862.8 55.2 V60.4" stroke="#e8705a" stroke-width="1"/><rect x="859.4" y="48.4" width="6.8" height="6.8" rx="0.8" fill="#fff" stroke="#666" stroke-width="0.9"/><rect x="871" y="48.4" width="6.8" height="6.8" rx="0.8" fill="#fff" stroke="#666" stroke-width="0.9"/><rect x="859.4" y="60.4" width="6.8" height="6.4" rx="0.8" fill="#fff" stroke="#666" stroke-width="0.9"/>
<path d="M864.8 87.8 L868.8 87.8 L866.8 90.2 Z" fill="#555"/>
<path d="M888.5 47.5 V44.5 H891.5 M899.5 52.5 V55.4 H896.5" fill="none" stroke="#666" stroke-width="0.9"/><rect x="890.5" y="46.5" width="7.5" height="7" fill="#ebc47b"/>
<path d="M967.9 49.199999999999996 L971.9 49.199999999999996 L969.9 51.6 Z" fill="#555"/>
<rect x="888.5" y="61.8" width="4.5" height="4.5" fill="#fff" stroke="#666" stroke-width="0.9"/><rect x="891" y="64.5" width="6" height="6" fill="#ebc47b"/><rect x="895.5" y="68.8" width="4.5" height="4.5" fill="#fff" stroke="#666" stroke-width="0.9"/>
<path d="M963.8 66.8 L967.8 66.8 L965.8 69.2 Z" fill="#555"/>
<rect x="890.3" y="81.3" width="6.5" height="6.2" rx="0.6" fill="none" stroke="#666" stroke-width="0.9"/><rect x="893.3" y="84.3" width="6.3" height="5.8" rx="0.6" fill="none" stroke="#666" stroke-width="0.9"/><rect x="888" y="79.6" width="2" height="2" fill="#2f6fba"/><rect x="898.5" y="79.6" width="2" height="2" fill="#2f6fba"/><rect x="888" y="89.7" width="2" height="2" fill="#2f6fba"/><rect x="898.5" y="89.7" width="2" height="2" fill="#2f6fba"/>
<path d="M931.2 85.8 L935.2 85.8 L933.2 88.2 Z" fill="#555"/>
<path d="M1001.9 47.4 A6.5 6.5 0 1 1 1004.5 61" fill="#fff" stroke="#5b9bd5" stroke-width="1"/><rect x="989.2" y="47.4" width="12.7" height="13.3" fill="#fff" stroke="#5b9bd5" stroke-width="1"/><path d="M1000.5 53.5 L1007.3 60.5 L1000.5 67.3 L993.6 60.5 Z" fill="#fff" stroke="#5b9bd5" stroke-width="1"/>
<path d="M1012.3 88.3 L1016.3 88.3 L1014.3 90.7 Z" fill="#555"/>
<path d="M1021 54.7 V49.5 L1022.5 46 H1025.5 L1026.3 49.5 V54.7 Z M1027.7 54.7 V49.5 L1028.5 46 H1031.5 L1033 49.5 V54.7 Z" fill="#5a5a5a"/><rect x="1025.8" y="48.5" width="2.4" height="3.5" fill="#5a5a5a"/><rect x="1022" y="44.7" width="3" height="1.6" fill="#5a5a5a"/><rect x="1029" y="44.7" width="3" height="1.6" fill="#5a5a5a"/>
<path d="M1056.3 49.3 L1060.3 49.3 L1058.3 51.7 Z" fill="#555"/>
<path d="M1021.5 66.6 L1023.5 63 L1032.5 63 L1030.5 66.6 Z" fill="#e8b665"/><path d="M1021.5 70 L1023.5 66.8 L1032.5 66.8 L1030.5 70 Z" fill="#2f6fba"/><path d="M1021.5 73.5 L1023.5 70.3 L1032.5 70.3 L1030.5 73.5 Z" fill="#666"/>
<path d="M1064 67.3 L1068 67.3 L1066 69.7 Z" fill="#555"/>
<path d="M1024.5 80 L1024.5 90 L1027 87.6 L1029 91 L1030.3 90.3 L1028.4 86.9 L1031.3 86.7 Z" fill="#fff" stroke="#666" stroke-width="0.9" stroke-linejoin="round"/>
<path d="M1062.3 85.1 L1066.3 85.1 L1064.3 87.5 Z" fill="#555"/>
<path d="M1110.3 106.5 L1113.7 103 L1117 106.5" fill="none" stroke="#555" stroke-width="1.4"/>
<path d="M190 135.5 L187 138.5 L190 141.5" fill="none" stroke="#444" stroke-width="1.6"/>
<path d="M71.5 185.5 L75.8 189.5 L71.5 193.5 Z" fill="#555"/>
<rect x="14.6" y="271.5" width="9" height="16.5" rx="0.8" fill="#008080" stroke="#1e1e1e" stroke-width="1.1"/>
<rect x="16" y="273" width="6.2" height="13.5" fill="none" stroke="#7fbcbc" stroke-width="0.6"/>
<rect x="101.6" y="271.5" width="9.5" height="17" rx="0.8" fill="#008080" stroke="#1e1e1e" stroke-width="1.1"/>
<rect x="103" y="273" width="6.7" height="14" fill="none" stroke="#7fbcbc" stroke-width="0.6"/>
<rect x="10.4" y="304.8" width="15.5" height="9" rx="0.8" fill="#008080" stroke="#1e1e1e" stroke-width="1.1"/>
<path d="M25.9 307.5 a1.8 1.8 0 0 1 0 3.6" fill="#ddd" stroke="#333" stroke-width="0.7"/>
<rect x="102" y="297.4" width="10.5" height="23.2" rx="0.8" fill="#008080" stroke="#1e1e1e" stroke-width="1.1"/>
<path d="M112.5 307 a1.8 1.8 0 0 1 0 3.6" fill="#ddd" stroke="#333" stroke-width="0.7"/>
<circle cx="12.5" cy="339" r="1.9" fill="#800080" stroke="#1e1e1e" stroke-width="0.8"/>
<circle cx="24.3" cy="339" r="1.9" fill="#800080" stroke="#1e1e1e" stroke-width="0.8"/>
<circle cx="12.5" cy="345" r="1.9" fill="#800080" stroke="#1e1e1e" stroke-width="0.8"/>
<circle cx="24.3" cy="345" r="1.9" fill="#800080" stroke="#1e1e1e" stroke-width="0.8"/>
<circle cx="12.5" cy="350.7" r="1.9" fill="#800080" stroke="#1e1e1e" stroke-width="0.8"/>
<circle cx="24.3" cy="350.7" r="1.9" fill="#800080" stroke="#1e1e1e" stroke-width="0.8"/>
<circle cx="18.5" cy="333.8" r="1.9" fill="#800080" stroke="#1e1e1e" stroke-width="0.8"/>
<circle cx="18.5" cy="355.6" r="1.9" fill="#800080" stroke="#1e1e1e" stroke-width="0.8"/>
<rect x="14.8" y="335.6" width="7.4" height="18" rx="0.8" fill="#008080" stroke="#1e1e1e" stroke-width="1.1"/>
<circle cx="101.2" cy="339" r="1.9" fill="#800080" stroke="#1e1e1e" stroke-width="0.8"/>
<circle cx="112.9" cy="339" r="1.9" fill="#800080" stroke="#1e1e1e" stroke-width="0.8"/>
<circle cx="101.2" cy="345" r="1.9" fill="#800080" stroke="#1e1e1e" stroke-width="0.8"/>
<circle cx="112.9" cy="345" r="1.9" fill="#800080" stroke="#1e1e1e" stroke-width="0.8"/>
<circle cx="101.2" cy="350.7" r="1.9" fill="#800080" stroke="#1e1e1e" stroke-width="0.8"/>
<circle cx="112.9" cy="350.7" r="1.9" fill="#800080" stroke="#1e1e1e" stroke-width="0.8"/>
<circle cx="107" cy="333.8" r="1.9" fill="#800080" stroke="#1e1e1e" stroke-width="0.8"/>
<circle cx="107" cy="355.6" r="1.9" fill="#800080" stroke="#1e1e1e" stroke-width="0.8"/>
<rect x="103.3" y="335.6" width="7.4" height="18" rx="3.7" fill="#008080" stroke="#1e1e1e" stroke-width="1.1"/>
<rect x="13.4" y="365" width="10" height="18.8" rx="5" fill="#008080" stroke="#1e1e1e" stroke-width="1.1"/>
<rect x="103.4" y="364.2" width="7.2" height="20" rx="0.8" fill="#008080" stroke="#1e1e1e" stroke-width="1.1"/>
<rect x="104.8" y="365.6" width="4.4" height="17.2" fill="none" stroke="#7fbcbc" stroke-width="0.6"/>
<circle cx="12.6" cy="397" r="1.9" fill="#800080" stroke="#1e1e1e" stroke-width="0.8"/>
<circle cx="24.6" cy="397" r="1.9" fill="#800080" stroke="#1e1e1e" stroke-width="0.8"/>
<circle cx="12.6" cy="403.5" r="1.9" fill="#800080" stroke="#1e1e1e" stroke-width="0.8"/>
<circle cx="24.6" cy="403.5" r="1.9" fill="#800080" stroke="#1e1e1e" stroke-width="0.8"/>
<circle cx="12.6" cy="410" r="1.9" fill="#800080" stroke="#1e1e1e" stroke-width="0.8"/>
<circle cx="24.6" cy="410" r="1.9" fill="#800080" stroke="#1e1e1e" stroke-width="0.8"/>
<circle cx="18.6" cy="392.8" r="1.9" fill="#800080" stroke="#1e1e1e" stroke-width="0.8"/>
<circle cx="18.6" cy="414.3" r="1.9" fill="#800080" stroke="#1e1e1e" stroke-width="0.8"/>
<ellipse cx="18.6" cy="403.5" rx="4.6" ry="10.2" fill="#008080" stroke="#1e1e1e" stroke-width="1.1"/>
<path d="M104.5 393.4 L109 393.4 L112 398 L112 409 L109 413.2 L104.5 413.2 L101.5 409 L101.5 398 Z" fill="#008080" stroke="#1e1e1e" stroke-width="1.1"/>
<rect x="15.2" y="421.9" width="6.8" height="20.6" rx="0.8" fill="#008080" stroke="#1e1e1e" stroke-width="1.1"/>
<circle cx="114.26820011984367" cy="435.5762724886302" r="2.1" fill="#800080" stroke="#1e1e1e" stroke-width="0.8"/>
<circle cx="109.77627248863024" cy="440.06820011984365" r="2.1" fill="#800080" stroke="#1e1e1e" stroke-width="0.8"/>
<circle cx="103.42372751136975" cy="440.06820011984365" r="2.1" fill="#800080" stroke="#1e1e1e" stroke-width="0.8"/>
<circle cx="98.93179988015632" cy="435.57627248863025" r="2.1" fill="#800080" stroke="#1e1e1e" stroke-width="0.8"/>
<circle cx="98.93179988015632" cy="429.22372751136976" r="2.1" fill="#800080" stroke="#1e1e1e" stroke-width="0.8"/>
<circle cx="103.42372751136975" cy="424.7317998801563" r="2.1" fill="#800080" stroke="#1e1e1e" stroke-width="0.8"/>
<circle cx="109.77627248863024" cy="424.7317998801563" r="2.1" fill="#800080" stroke="#1e1e1e" stroke-width="0.8"/>
<circle cx="114.26820011984367" cy="429.2237275113697" r="2.1" fill="#800080" stroke="#1e1e1e" stroke-width="0.8"/>
<circle cx="106.6" cy="432.4" r="6.6" fill="#008080" stroke="#1e1e1e" stroke-width="1.1"/>
<circle cx="19.4" cy="462.9" r="8.2" fill="#008080" stroke="#1e1e1e" stroke-width="1.1"/>
<rect x="101.6" y="456" width="8.5" height="12" rx="0.8" fill="#008080" stroke="#1e1e1e" stroke-width="1.1"/>
<path d="M110.1 459 a1.4 1.4 0 0 1 0 2.8 M110.1 463.5 a1.4 1.4 0 0 1 0 2.8" fill="none" stroke="#333" stroke-width="0.6"/>
<path d="M11.8 485.8 L23.5 485.8 L23.5 496 A11.7 10.2 0 0 1 11.8 485.8 Z" fill="#00ffff" stroke="#1e1e1e" stroke-width="1"/>
<rect x="101.4" y="482.8" width="11.8" height="17.2" rx="0.8" fill="#00ffff" stroke="#1e1e1e" stroke-width="1.1"/>
<path d="M6.4 508.2 L14 508.2 L16.5 517 L21 521.5 L30.4 523.5 L30.4 532 L6.4 532 Z" fill="#00ffff" stroke="#1e1e1e" stroke-width="1.1"/>
<rect x="97.6" y="508.2" width="18" height="23.8" rx="0.8" fill="#008080" stroke="#1e1e1e" stroke-width="1.1"/>
<path d="M115.6 512 a1.5 1.5 0 0 1 0 3 M115.6 525 a1.5 1.5 0 0 1 0 3" fill="#ddd" stroke="#333" stroke-width="0.6"/>
<rect x="12.4" y="541.7" width="12.6" height="13" rx="1.5" fill="#800080" stroke="#1e1e1e" stroke-width="1.1"/>
<path d="M14.5 543.5 L14.5 553" stroke="#1e1e1e" stroke-width="0.8"/>
<rect x="100.5" y="540.4" width="12" height="17.4" rx="1.2" fill="#800080" stroke="#1e1e1e" stroke-width="1.1"/>
<path d="M103.5 541 L103.5 557.5 M103.5 549 L112.5 549" stroke="#1e1e1e" stroke-width="0.8"/>
<rect x="12.4" y="566.4" width="11.8" height="24" rx="1.2" fill="#800080" stroke="#1e1e1e" stroke-width="1.1"/>
<path d="M15.4 567 L15.4 590 M15.4 574.5 L24 574.5 M15.4 582.5 L24 582.5" stroke="#1e1e1e" stroke-width="0.8"/>
<rect x="101" y="572.4" width="13" height="13.4" rx="3.5" fill="#800080" stroke="#1e1e1e" stroke-width="1.1"/><path d="M100 574.5 Q98.8 579 100 583.5" fill="none" stroke="#1e1e1e" stroke-width="0.9"/>
<rect x="13" y="600.9" width="13" height="14.2" rx="3.5" fill="#800080" stroke="#1e1e1e" stroke-width="1.1"/><path d="M12 603 Q10.8 608 12 613" fill="none" stroke="#1e1e1e" stroke-width="0.9"/>
<path d="M103 601 L112.6 601 L112.6 615 L103 615 L100 608 Z" fill="#800080" stroke="#1e1e1e" stroke-width="1.1"/>
<rect x="11" y="630.2" width="15" height="12.4" rx="2" fill="#800080" stroke="#1e1e1e" stroke-width="1.1"/>
<path d="M13.5 630.5 L13.5 642.3" stroke="#1e1e1e" stroke-width="0.8"/>
<rect x="99.5" y="630.6" width="13.5" height="12" rx="1" fill="#800080" stroke="#1e1e1e" stroke-width="1.1"/>
<path d="M98.4 629.8 L114.2 629.8 M98.4 642.9 L114.2 642.9" stroke="#1e1e1e" stroke-width="1.3"/>
<rect x="205" y="137" width="893" height="2" fill="#ababab"/>
<rect x="217" y="126" width="1" height="485" fill="#a9a9a9"/>
<path d="M205.5 131.5 H216 M211.5 126 V137" stroke="#9a9a9a" stroke-width="1"/>
<rect x="250.8" y="125" width="1" height="12.5" fill="#9a9a9a"/><text x="252.3" y="132.4" font-size="7.2" fill="#7a7a7a" font-family="Liberation Sans">-6</text><rect x="290.6" y="125" width="1" height="12.5" fill="#9a9a9a"/><text x="292.1" y="132.4" font-size="7.2" fill="#7a7a7a" font-family="Liberation Sans">-5</text><rect x="330.5" y="125" width="1" height="12.5" fill="#9a9a9a"/><text x="332.0" y="132.4" font-size="7.2" fill="#7a7a7a" font-family="Liberation Sans">-4</text><rect x="370.4" y="125" width="1" height="12.5" fill="#9a9a9a"/><text x="371.9" y="132.4" font-size="7.2" fill="#7a7a7a" font-family="Liberation Sans">-3</text><rect x="410.3" y="125" width="1" height="12.5" fill="#9a9a9a"/><text x="411.8" y="132.4" font-size="7.2" fill="#7a7a7a" font-family="Liberation Sans">-2</text><rect x="450.1" y="125" width="1" height="12.5" fill="#9a9a9a"/><text x="451.6" y="132.4" font-size="7.2" fill="#7a7a7a" font-family="Liberation Sans">-1</text><rect x="490.0" y="125" width="1" height="12.5" fill="#9a9a9a"/><text x="491.5" y="132.4" font-size="7.2" fill="#7a7a7a" font-family="Liberation Sans">0</text><rect x="529.9" y="125" width="1" height="12.5" fill="#9a9a9a"/><text x="531.4" y="132.4" font-size="7.2" fill="#7a7a7a" font-family="Liberation Sans">1</text><rect x="569.7" y="125" width="1" height="12.5" fill="#9a9a9a"/><text x="571.2" y="132.4" font-size="7.2" fill="#7a7a7a" font-family="Liberation Sans">2</text><rect x="609.6" y="125" width="1" height="12.5" fill="#9a9a9a"/><text x="611.1" y="132.4" font-size="7.2" fill="#7a7a7a" font-family="Liberation Sans">3</text><rect x="649.5" y="125" width="1" height="12.5" fill="#9a9a9a"/><text x="651.0" y="132.4" font-size="7.2" fill="#7a7a7a" font-family="Liberation Sans">4</text><rect x="689.4" y="125" width="1" height="12.5" fill="#9a9a9a"/><text x="690.9" y="132.4" font-size="7.2" fill="#7a7a7a" font-family="Liberation Sans">5</text><rect x="729.2" y="125" width="1" height="12.5" fill="#9a9a9a"/><text x="730.7" y="132.4" font-size="7.2" fill="#7a7a7a" font-family="Liberation Sans">6</text><rect x="769.1" y="125" width="1" height="12.5" fill="#9a9a9a"/><text x="770.6" y="132.4" font-size="7.2" fill="#7a7a7a" font-family="Liberation Sans">7</text><rect x="809.0" y="125" width="1" height="12.5" fill="#9a9a9a"/><text x="810.5" y="132.4" font-size="7.2" fill="#7a7a7a" font-family="Liberation Sans">8</text><rect x="848.8" y="125" width="1" height="12.5" fill="#9a9a9a"/><text x="850.3" y="132.4" font-size="7.2" fill="#7a7a7a" font-family="Liberation Sans">9</text><rect x="888.7" y="125" width="1" height="12.5" fill="#9a9a9a"/><text x="890.2" y="132.4" font-size="7.2" fill="#7a7a7a" font-family="Liberation Sans">10</text><rect x="928.6" y="125" width="1" height="12.5" fill="#9a9a9a"/><text x="930.1" y="132.4" font-size="7.2" fill="#7a7a7a" font-family="Liberation Sans">11</text><rect x="968.4" y="125" width="1" height="12.5" fill="#9a9a9a"/><text x="969.9" y="132.4" font-size="7.2" fill="#7a7a7a" font-family="Liberation Sans">12</text><rect x="1008.3" y="125" width="1" height="12.5" fill="#9a9a9a"/><text x="1009.8" y="132.4" font-size="7.2" fill="#7a7a7a" font-family="Liberation Sans">13</text><rect x="1048.2" y="125" width="1" height="12.5" fill="#9a9a9a"/><text x="1049.7" y="132.4" font-size="7.2" fill="#7a7a7a" font-family="Liberation Sans">14</text><rect x="1088.0" y="125" width="1" height="12.5" fill="#9a9a9a"/><text x="1089.5" y="132.4" font-size="7.2" fill="#7a7a7a" font-family="Liberation Sans">15</text><text x="219" y="132.4" font-size="7.2" fill="#7a7a7a" font-family="Liberation Sans">'</text><rect x="205" y="594.6" width="12.5" height="1" fill="#9a9a9a"/><text transform="translate(211.1,600.2) rotate(-90)" font-size="7.2" fill="#7a7a7a" font-family="Liberation Sans">0</text><rect x="205" y="554.7" width="12.5" height="1" fill="#9a9a9a"/><text transform="translate(211.1,560.3) rotate(-90)" font-size="7.2" fill="#7a7a7a" font-family="Liberation Sans">1</text><rect x="205" y="514.9" width="12.5" height="1" fill="#9a9a9a"/><text transform="translate(211.1,520.5) rotate(-90)" font-size="7.2" fill="#7a7a7a" font-family="Liberation Sans">2</text><rect x="205" y="475.0" width="12.5" height="1" fill="#9a9a9a"/><text transform="translate(211.1,480.6) rotate(-90)" font-size="7.2" fill="#7a7a7a" font-family="Liberation Sans">3</text><rect x="205" y="435.1" width="12.5" height="1" fill="#9a9a9a"/><text transform="translate(211.1,440.7) rotate(-90)" font-size="7.2" fill="#7a7a7a" font-family="Liberation Sans">4</text><rect x="205" y="395.2" width="12.5" height="1" fill="#9a9a9a"/><text transform="translate(211.1,400.9) rotate(-90)" font-size="7.2" fill="#7a7a7a" font-family="Liberation Sans">5</text><rect x="205" y="355.4" width="12.5" height="1" fill="#9a9a9a"/><text transform="translate(211.1,361.0) rotate(-90)" font-size="7.2" fill="#7a7a7a" font-family="Liberation Sans">6</text><rect x="205" y="315.5" width="12.5" height="1" fill="#9a9a9a"/><text transform="translate(211.1,321.1) rotate(-90)" font-size="7.2" fill="#7a7a7a" font-family="Liberation Sans">7</text><rect x="205" y="275.6" width="12.5" height="1" fill="#9a9a9a"/><text transform="translate(211.1,281.2) rotate(-90)" font-size="7.2" fill="#7a7a7a" font-family="Liberation Sans">8</text><rect x="205" y="235.8" width="12.5" height="1" fill="#9a9a9a"/><text transform="translate(211.1,241.4) rotate(-90)" font-size="7.2" fill="#7a7a7a" font-family="Liberation Sans">9</text><rect x="205" y="195.9" width="12.5" height="1" fill="#9a9a9a"/><text transform="translate(211.1,206.0) rotate(-90)" font-size="7.2" fill="#7a7a7a" font-family="Liberation Sans">10</text><rect x="205" y="156.0" width="12.5" height="1" fill="#9a9a9a"/><text transform="translate(211.1,166.1) rotate(-90)" font-size="7.2" fill="#7a7a7a" font-family="Liberation Sans">11</text>
<rect x="491" y="157.5" width="340" height="439" fill="#a6a6a6" opacity="0.6"/>
<rect x="490.5" y="156.5" width="339" height="438" fill="#fff" stroke="#8a8a8a" stroke-width="1"/>
<rect x="500.5" y="166.5" width="319" height="418" fill="none" stroke="#e0e0e0" stroke-width="1" stroke-dasharray="4.5 2.5"/>
<rect x="557.5" y="395.5" width="13" height="25" fill="#fff" stroke="#333" stroke-width="1"/>
<rect x="630.5" y="395.5" width="17" height="30" fill="#fff" stroke="#333" stroke-width="1"/>
<path d="M550.5 488.5 H570.5 V509.5 A20 21 0 0 1 550.5 488.5 Z" fill="#fff" stroke="#333" stroke-width="1"/>
<path d="M630.5 466.7 A5.4 5.3 0 0 0 630.5 477.3" fill="#fff" stroke="#111" stroke-width="2.2"/><path d="M654.5 466.7 A5.4 5.3 0 0 1 654.5 477.3" fill="#fff" stroke="#111" stroke-width="2.2"/><path d="M630.5 479.09999999999997 A5.4 5.3 0 0 0 630.5 489.7" fill="#fff" stroke="#111" stroke-width="2.2"/><path d="M654.5 479.09999999999997 A5.4 5.3 0 0 1 654.5 489.7" fill="#fff" stroke="#111" stroke-width="2.2"/><path d="M630.5 491.4 A5.4 5.3 0 0 0 630.5 502.0" fill="#fff" stroke="#111" stroke-width="2.2"/><path d="M654.5 491.4 A5.4 5.3 0 0 1 654.5 502.0" fill="#fff" stroke="#111" stroke-width="2.2"/><path d="M637 461 V457.5 Q637 454.8 640 454.8 H644.5 Q647.4 454.8 647.4 457.5 V461" fill="#fff" stroke="#111" stroke-width="1.6"/><path d="M638.5 457.8 H646" stroke="#888" stroke-width="0.8"/><path d="M637 508 V511.3 Q637 514 640 514 H644.5 Q647.4 514 647.4 511.3 V508" fill="#fff" stroke="#111" stroke-width="1.6"/><path d="M638.5 511 H646" stroke="#888" stroke-width="0.8"/><rect x="630.5" y="459.5" width="24" height="50" rx="12" fill="#fff" stroke="#222" stroke-width="1"/>
<circle cx="726.4" cy="469.8" r="4.9" fill="#fff" stroke="#111" stroke-width="1.9"/><circle cx="737.1" cy="474.3" r="4.9" fill="#fff" stroke="#111" stroke-width="1.9"/><circle cx="741.6" cy="485.0" r="4.9" fill="#fff" stroke="#111" stroke-width="1.9"/><circle cx="737.1" cy="495.7" r="4.9" fill="#fff" stroke="#111" stroke-width="1.9"/><circle cx="726.4" cy="500.2" r="4.9" fill="#fff" stroke="#111" stroke-width="1.9"/><circle cx="715.7" cy="495.7" r="4.9" fill="#fff" stroke="#111" stroke-width="1.9"/><circle cx="711.2" cy="485.0" r="4.9" fill="#fff" stroke="#111" stroke-width="1.9"/><circle cx="715.7" cy="474.3" r="4.9" fill="#fff" stroke="#111" stroke-width="1.9"/><rect x="723.8" y="468.2" width="5.2" height="5.2" fill="#fff" stroke="#c4c4c4" stroke-width="0.9"/><rect x="733.8" y="472.4" width="5.2" height="5.2" fill="#fff" stroke="#c4c4c4" stroke-width="0.9"/><rect x="738.0" y="482.4" width="5.2" height="5.2" fill="#fff" stroke="#c4c4c4" stroke-width="0.9"/><rect x="733.8" y="492.4" width="5.2" height="5.2" fill="#fff" stroke="#c4c4c4" stroke-width="0.9"/><rect x="723.8" y="496.6" width="5.2" height="5.2" fill="#fff" stroke="#c4c4c4" stroke-width="0.9"/><rect x="713.8" y="492.4" width="5.2" height="5.2" fill="#fff" stroke="#c4c4c4" stroke-width="0.9"/><rect x="709.6" y="482.4" width="5.2" height="5.2" fill="#fff" stroke="#c4c4c4" stroke-width="0.9"/><rect x="713.8" y="472.4" width="5.2" height="5.2" fill="#fff" stroke="#c4c4c4" stroke-width="0.9"/><circle cx="726.4" cy="485" r="11.2" fill="#fff" stroke="#222" stroke-width="1.1"/><path d="M730.3 454.2 A4.6 4.6 0 1 0 731.2 459.5" fill="none" stroke="#b0b0b0" stroke-width="1.9"/><path d="M728.3 452.6 L733 453.4 L731.2 457.4 Z" fill="#b0b0b0"/><path d="M726.4 462.1 V464.5" stroke="#b0b0b0" stroke-width="0.8"/>
<rect x="1098" y="126" width="14" height="485" fill="#dcdcdc"/>
<rect x="1099.5" y="126.5" width="11" height="11" fill="#fff" stroke="#d0d0d0"/><path d="M1102 134 L1105 130.5 L1108 134 Z" fill="#444"/>
<rect x="1099.5" y="598.5" width="11" height="11" fill="#fff" stroke="#d0d0d0"/><path d="M1102 602 L1105 605.5 L1108 602 Z" fill="#444"/>
<rect x="1099.5" y="139" width="11" height="458" fill="#c4c4c4"/>
<rect x="1099.5" y="263" width="11" height="219" fill="#fff"/>
<rect x="206" y="612" width="892" height="12" fill="#dcdcdc"/>
<rect x="206.5" y="612.5" width="11" height="11" fill="#fff" stroke="#d0d0d0"/><path d="M213.5 615 L210 618 L213.5 621 Z" fill="#444"/>
<rect x="1085.5" y="612.5" width="11" height="11" fill="#fff" stroke="#d0d0d0"/><path d="M1089 615 L1092.5 618 L1089 621 Z" fill="#444"/>
<rect x="218" y="612.5" width="867" height="11" fill="#c4c4c4"/>
<rect x="251" y="612.5" width="790" height="11" fill="#fff"/>
<rect x="1112" y="112" width="13" height="542" fill="#dedede"/>
<rect x="1115" y="112" width="1.5" height="542" fill="#c9c9c9"/><rect x="1117" y="112" width="4" height="542" fill="#fff"/><rect x="1121" y="112" width="1" height="542" fill="#555"/><rect x="1122" y="112" width="3" height="542" fill="#fff"/>
<path d="M284.8 640.5 L288 636.8 L291.2 640.5 Z" fill="#333"/>
<circle cx="318" cy="640" r="5.6" fill="none" stroke="#444" stroke-width="1.2"/><path d="M315 640 H321 M318 637 V643" stroke="#444" stroke-width="1.3"/>
<rect x="400.5" y="658.5" width="4" height="4" fill="none" stroke="#ddd"/><rect x="400.5" y="662.5" width="10" height="5" fill="none" stroke="#ddd"/><path d="M402 664.5 V667 M404 664.5 V667 M406 664.5 V667 M408 664.5 V667" stroke="#ddd" stroke-width="0.8"/><rect x="406" y="658" width="4" height="3" fill="#ddd"/>
<rect x="926.5" y="658.5" width="9" height="6" fill="none" stroke="#ddd"/><path d="M931 664.5 V668 M928.5 668 H933.5 M928 660.5 H934" stroke="#ddd"/>
<rect x="950.5" y="662.5" width="4.5" height="1.4" fill="#e6e6e6"/><rect x="958" y="662.5" width="78" height="1" fill="#cfcfcf"/><rect x="975.7" y="658.7" width="3.4" height="8" fill="#eee"/><rect x="996.6" y="660.5" width="1" height="4.5" fill="#cfcfcf"/><path d="M1038.5 663 H1045.5 M1042 659.5 V666.5" stroke="#eee" stroke-width="1.4"/>
<rect x="1084.5" y="658.5" width="10" height="10" fill="none" stroke="#ddd"/><path d="M1086.5 660.5 L1088.5 662.5 M1092.5 660.5 L1090.5 662.5 M1086.5 666.5 L1088.5 664.5 M1092.5 666.5 L1090.5 664.5" stroke="#ddd"/>
<path d="M1106.5 660.5 V658.5 H1110.5 V662.5 H1106.5 Z M1112.5 658.5 H1117.5 V662.5 H1112.5 Z M1106.5 664.5 H1111.5 V668.5 H1106.5 Z M1113.5 664.5 H1117.5 V668.5 H1113.5 Z" fill="none" stroke="#ddd"/>
<rect x="0" y="671.6" width="1125" height="31.4" fill="#2a93cd"/><path d="M740 672 L757.3 672 L731.5 703 L716 703 Z" fill="#2f6c7c" opacity="0.85"/><path d="M390 672 L401.5 672 L375.5 703 L362 703 Z" fill="#2f6c7c" opacity="0.8"/><rect x="89.5" y="672.5" width="45" height="30" fill="#ffffff" fill-opacity="0.22" stroke="#ffffff" stroke-opacity="0.35"/><rect x="621.5" y="672.5" width="45" height="30" fill="#ffffff" fill-opacity="0.25" stroke="#ffffff" stroke-opacity="0.35"/><rect x="669.5" y="672.5" width="45.5" height="30" fill="#ffffff" fill-opacity="0.38" stroke="#ffffff" stroke-opacity="0.5"/><path d="M8.7 679.5 L18.6 678 L18.6 686.6 L8.7 686.6 Z M19.8 677.8 L30.4 676.4 L30.4 686.6 L19.8 686.6 Z M8.7 687.8 L18.6 687.8 L18.6 696.3 L8.7 695 Z M19.8 687.8 L30.4 687.8 L30.4 698 L19.8 696.6 Z" fill="#fff"/><ellipse cx="63.5" cy="686.5" rx="14" ry="5.2" transform="rotate(-40 63.5 686.5)" fill="none" stroke="#f2c10f" stroke-width="1.7"/><path d="M57.2 687 H71.6 A7.2 7.4 0 1 0 70 692.8" fill="none" stroke="#5cc8f2" stroke-width="3.8"/><path d="M132.4 672.5 L134.5 672.5 L134.5 676 L106 703 L96.9 703 Z" fill="#2f6c7c" opacity="0.6"/><path d="M99.5 679 L107 678 L109.5 680 L123.5 680 L124 698.9 L99.1 698.9 Z" fill="#f3d688"/><rect x="100" y="684" width="24" height="15" fill="#f8e3a0"/><rect x="102.5" y="677.8" width="2.5" height="2" fill="#2cb24a"/><rect x="108.5" y="679.5" width="2.5" height="2" fill="#e03a2a"/><rect x="114.5" y="681" width="2.5" height="2" fill="#2f8fe0"/><path d="M102.5 698.9 V692 Q102.5 689.5 105 689.5 H119 Q121.5 689.5 121.5 692 V698.9 H117 V694 H107 V698.9 Z" fill="#7ccaf0"/><rect x="161.4" y="678.2" width="10" height="17" fill="#fff"/><rect x="163.4" y="680.5" width="6.5" height="1.3" fill="#207245" opacity="0.9"/><rect x="163.4" y="683.5" width="6.5" height="1.3" fill="#207245" opacity="0.9"/><rect x="163.4" y="686.5" width="6.5" height="1.3" fill="#207245" opacity="0.9"/><rect x="163.4" y="689.5" width="6.5" height="1.3" fill="#207245" opacity="0.9"/><rect x="163.4" y="692.5" width="6.5" height="1.3" fill="#207245" opacity="0.9"/><path d="M148.4 677.6 L162.20000000000002 675.6 L162.20000000000002 699 L148.4 696.4 Z" fill="#207245"/><text x="155.3" y="692.2" font-size="11.3" font-weight="700" fill="#fff" text-anchor="middle" font-family="Liberation Sans">X</text><rect x="209.8" y="678.2" width="10" height="17" fill="#fff"/><rect x="211.8" y="680.5" width="6.5" height="1.3" fill="#80397b" opacity="0.9"/><rect x="211.8" y="683.5" width="6.5" height="1.3" fill="#80397b" opacity="0.9"/><rect x="211.8" y="686.5" width="6.5" height="1.3" fill="#80397b" opacity="0.9"/><rect x="211.8" y="689.5" width="6.5" height="1.3" fill="#80397b" opacity="0.9"/><rect x="211.8" y="692.5" width="6.5" height="1.3" fill="#80397b" opacity="0.9"/><path d="M196.8 677.6 L210.60000000000002 675.6 L210.60000000000002 699 L196.8 696.4 Z" fill="#80397b"/><text x="203.70000000000002" y="692.2" font-size="11.3" font-weight="700" fill="#fff" text-anchor="middle" font-family="Liberation Sans">N</text><rect x="258.2" y="682" width="10.5" height="10.8" fill="#fff"/><path d="M258.7 683 L263.4 687.5 L268.2 683" fill="none" stroke="#0a6fc2" stroke-width="1.3"/><path d="M245.2 677.6 L259.0 675.6 L259.0 699 L245.2 696.4 Z" fill="#0a6fc2"/><text x="252.1" y="692.2" font-size="11.3" font-weight="700" fill="#fff" text-anchor="middle" font-family="Liberation Sans">O</text><rect x="306.8" y="678.4" width="10" height="16" fill="#fff" stroke="#d24726" stroke-width="1"/><path d="M310.8 681 a3 3 0 1 0 3 3 h-3 z" fill="#d24726"/><path d="M309.3 688.5 H314.8 M309.3 691 H314.8" stroke="#d24726" stroke-width="1"/><path d="M293.8 677.6 L307.6 675.6 L307.6 699 L293.8 696.4 Z" fill="#d24726"/><text x="300.7" y="692.2" font-size="11.3" font-weight="700" fill="#fff" text-anchor="middle" font-family="Liberation Sans">P</text><rect x="355.2" y="678.4" width="10" height="16" fill="#fff" stroke="#31752f" stroke-width="1"/><path d="M358.2 681 V686 H362.2 V689" fill="none" stroke="#31752f" stroke-width="1.3"/><path d="M360.2 688.5 L362.2 691.5 L364.2 688.5 Z" fill="#31752f"/><path d="M342.2 677.6 L356.0 675.6 L356.0 699 L342.2 696.4 Z" fill="#31752f"/><text x="349.09999999999997" y="692.2" font-size="11.3" font-weight="700" fill="#fff" text-anchor="middle" font-family="Liberation Sans">P</text><rect x="403.8" y="678.4" width="10" height="16" fill="#fff" stroke="#3955a3" stroke-width="1"/><circle cx="410.3" cy="682" r="1.6" fill="none" stroke="#3955a3" stroke-width="0.9"/><path d="M410.3 683.6 V687 H407.3 V690" fill="none" stroke="#3955a3" stroke-width="0.9"/><rect x="405.8" y="689.5" width="3" height="3" fill="none" stroke="#3955a3" stroke-width="0.9"/><path d="M390.8 677.6 L404.6 675.6 L404.6 699 L390.8 696.4 Z" fill="#3955a3"/><text x="397.7" y="692.2" font-size="11.3" font-weight="700" fill="#fff" text-anchor="middle" font-family="Liberation Sans">V</text><rect x="452.3" y="678.2" width="10" height="17" fill="#fff"/><rect x="454.3" y="680.5" width="6.5" height="1.3" fill="#2b579a" opacity="0.9"/><rect x="454.3" y="683.5" width="6.5" height="1.3" fill="#2b579a" opacity="0.9"/><rect x="454.3" y="686.5" width="6.5" height="1.3" fill="#2b579a" opacity="0.9"/><rect x="454.3" y="689.5" width="6.5" height="1.3" fill="#2b579a" opacity="0.9"/><rect x="454.3" y="692.5" width="6.5" height="1.3" fill="#2b579a" opacity="0.9"/><path d="M439.3 677.6 L453.1 675.6 L453.1 699 L439.3 696.4 Z" fill="#2b579a"/><text x="446.2" y="692.2" font-size="11.3" font-weight="700" fill="#fff" text-anchor="middle" font-family="Liberation Sans">W</text><rect x="645.5" y="678.2" width="10" height="17" fill="#fff"/><rect x="647.5" y="680.5" width="6.5" height="1.3" fill="#2b579a" opacity="0.9"/><rect x="647.5" y="683.5" width="6.5" height="1.3" fill="#2b579a" opacity="0.9"/><rect x="647.5" y="686.5" width="6.5" height="1.3" fill="#2b579a" opacity="0.9"/><rect x="647.5" y="689.5" width="6.5" height="1.3" fill="#2b579a" opacity="0.9"/><rect x="647.5" y="692.5" width="6.5" height="1.3" fill="#2b579a" opacity="0.9"/><path d="M632.5 677.6 L646.3 675.6 L646.3 699 L632.5 696.4 Z" fill="#2b579a"/><text x="639.4" y="692.2" font-size="11.3" font-weight="700" fill="#fff" text-anchor="middle" font-family="Liberation Sans">W</text><rect x="693.7" y="678.4" width="10" height="16" fill="#fff" stroke="#3955a3" stroke-width="1"/><circle cx="700.2" cy="682" r="1.6" fill="none" stroke="#3955a3" stroke-width="0.9"/><path d="M700.2 683.6 V687 H697.2 V690" fill="none" stroke="#3955a3" stroke-width="0.9"/><rect x="695.7" y="689.5" width="3" height="3" fill="none" stroke="#3955a3" stroke-width="0.9"/><path d="M680.7 677.6 L694.5 675.6 L694.5 699 L680.7 696.4 Z" fill="#3955a3"/><text x="687.6" y="692.2" font-size="11.3" font-weight="700" fill="#fff" text-anchor="middle" font-family="Liberation Sans">V</text><rect x="488" y="679" width="23" height="17" fill="#f2f2f2"/><path d="M488 679 L499.5 689 L511 679 Z" fill="#d83b3b"/><path d="M488 696 L497 687 M511 696 L502 687" stroke="#ccc" stroke-width="0.8"/><circle cx="548" cy="687" r="11.8" fill="#1d4f96"/><circle cx="548.5" cy="686.5" r="9.6" fill="#3f86d0"/><path d="M540 681 Q546 676 553 679 Q548 680 546 683 Z" fill="#a9d4f5"/><path d="M539 688 L548 682.5 L557.5 688 L557 696 L539.5 696 Z" fill="#f1f1f1"/><path d="M539 688 L548.2 692.5 L557.5 688" fill="none" stroke="#9a9a9a" stroke-width="0.8"/><circle cx="596" cy="687.5" r="11.6" fill="#e86a1c"/><circle cx="598.5" cy="686" r="8" fill="#3f6fc4"/><circle cx="599.5" cy="684.5" r="4" fill="#6fa0e0"/><path d="M585 685 Q587 676 595 675.5 Q590 679 591.5 684 Q590.5 692 598 694.5 Q604.5 695.5 607.5 690 Q606 699 596 699.2 Q584.5 699 584.5 688 Z" fill="#f08c24"/><path d="M603 676.5 Q606.5 678 607 681" fill="none" stroke="#f5a833" stroke-width="1.6"/><path d="M1046.6 690.2 L1049.6 686 L1052.7 690.2 Z" fill="#fff"/><path d="M1063 682.5 V694.5" stroke="#e6e6e6" stroke-width="1.2"/><path d="M1063.5 683 L1071 683 L1071 689 L1063.5 689 Z" fill="#f2f2f2"/><circle cx="1071" cy="691" r="4" fill="#d62b2b"/><path d="M1069 689 L1073 693 M1073 689 L1069 693" stroke="#fff" stroke-width="1.1"/><path d="M1081.5 684 V692 M1083 684 a1.5 1.5 0 1 0 0.1 0" stroke="#e6e6e6" fill="none" stroke-width="1.2"/><path d="M1085 683.5 H1093 V690" fill="none" stroke="#e6e6e6" stroke-width="1.2"/><circle cx="1090" cy="691" r="4" fill="#d62b2b"/><path d="M1088 689 L1092 693 M1092 689 L1088 693" stroke="#fff" stroke-width="1.1"/><path d="M1100 685.5 H1103 L1106.5 682.5 V693 L1103 690 H1100 Z" fill="#eee"/><path d="M1108 685 Q1110 687.7 1108 690.5 M1110 683.5 Q1113 687.7 1110 692" fill="none" stroke="#ddd" stroke-width="1"/></svg></body></html>
